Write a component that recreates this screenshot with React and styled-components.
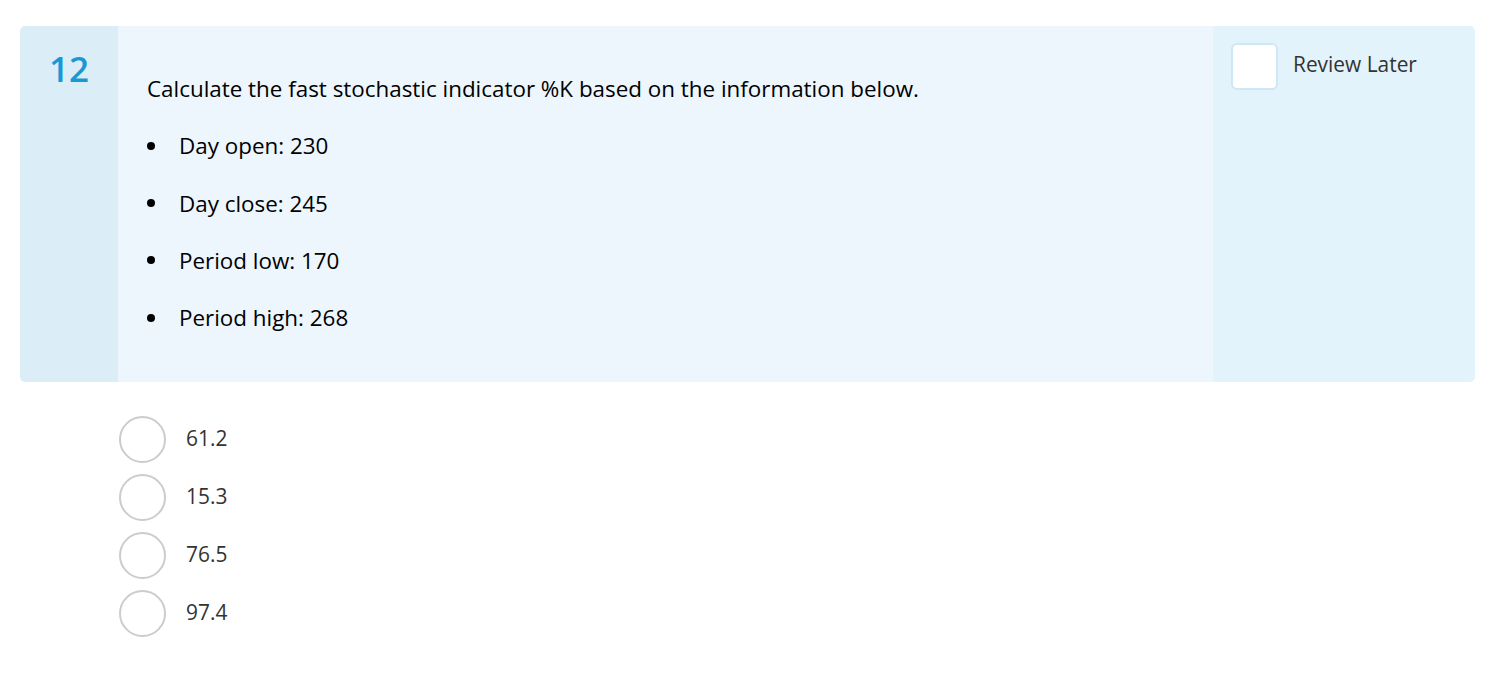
import React from 'react';
import styled, { createGlobalStyle } from 'styled-components';

const GlobalStyle = createGlobalStyle`
  body {
    margin: 0;
    background: #ffffff;
    font-family: "Open Sans", "Noto Sans", sans-serif;
  }
`;

const Page = styled.div`
  padding: 26px 27px 0 20px;
`;

const QuestionCard = styled.div`
  display: grid;
  grid-template-columns: 98px 1fr 262px;
  min-height: 356px;
  border-radius: 5px;
  overflow: hidden;
`;

const NumberColumn = styled.div`
  background: #dbeef8;
  display: flex;
  justify-content: center;
  padding-top: 20px;
`;

const QuestionNumber = styled.div`
  font-size: 35px;
  font-weight: 600;
  color: #1a98d5;
  line-height: 46px;
`;

const Body = styled.div`
  background: #edf6fd;
  padding: 48px 29px 30px 29px;
  color: #000;
`;

const Prompt = styled.p`
  margin: 0 0 13px;
  font-size: 22.4px;
  line-height: 30px;
`;

const FactList = styled.ul`
  margin: 0;
  padding: 0;
  list-style: none;
`;

const Fact = styled.li`
  display: flex;
  align-items: center;
  height: 57.4px;
  font-size: 22.4px;

  &::before {
    content: '';
    width: 8px;
    height: 8px;
    border-radius: 50%;
    background: #000;
    margin: 0 24px 0 0;
  }
`;

const Aside = styled.div`
  background: #e3f3fb;
  padding: 17px 18px;
`;

const ReviewToggle = styled.label`
  display: flex;
  align-items: flex-start;
  gap: 15px;
  color: #333;
  font-size: 20.9px;
  cursor: pointer;
`;

const Box = styled.span`
  width: 47px;
  height: 47px;
  box-sizing: border-box;
  border: 2px solid #cfe7f4;
  border-radius: 6px;
  background: #fff;
  flex: none;
`;

const ReviewText = styled.span`
  line-height: 28px;
  margin-top: 7px;
`;

const Options = styled.div`
  padding: 34px 0 0 99px;
  display: flex;
  flex-direction: column;
  gap: 11px;
`;

const Option = styled.label`
  display: flex;
  align-items: center;
  gap: 20px;
  font-size: 20.9px;
  color: #333;
  cursor: pointer;
`;

const Radio = styled.span`
  width: 47px;
  height: 47px;
  box-sizing: border-box;
  border: 2px solid #cccccc;
  border-radius: 50%;
  background: #fff;
  flex: none;
`;

const OptionText = styled.span`
  margin-top: -4px;
`;

const facts = ['Day open: 230', 'Day close: 245', 'Period low: 170', 'Period high: 268'];
const answers = ['61.2', '15.3', '76.5', '97.4'];

const App = () => (
  <>
    <GlobalStyle />
    <Page>
      <QuestionCard>
        <NumberColumn>
          <QuestionNumber>12</QuestionNumber>
        </NumberColumn>
        <Body>
          <Prompt>Calculate the fast stochastic indicator %K based on the information below.</Prompt>
          <FactList>
            {facts.map((f) => (
              <Fact key={f}>{f}</Fact>
            ))}
          </FactList>
        </Body>
        <Aside>
          <ReviewToggle>
            <Box />
            <ReviewText>Review Later</ReviewText>
          </ReviewToggle>
        </Aside>
      </QuestionCard>
      <Options>
        {answers.map((a) => (
          <Option key={a}>
            <Radio />
            <OptionText>{a}</OptionText>
          </Option>
        ))}
      </Options>
    </Page>
  </>
);

export default App;
